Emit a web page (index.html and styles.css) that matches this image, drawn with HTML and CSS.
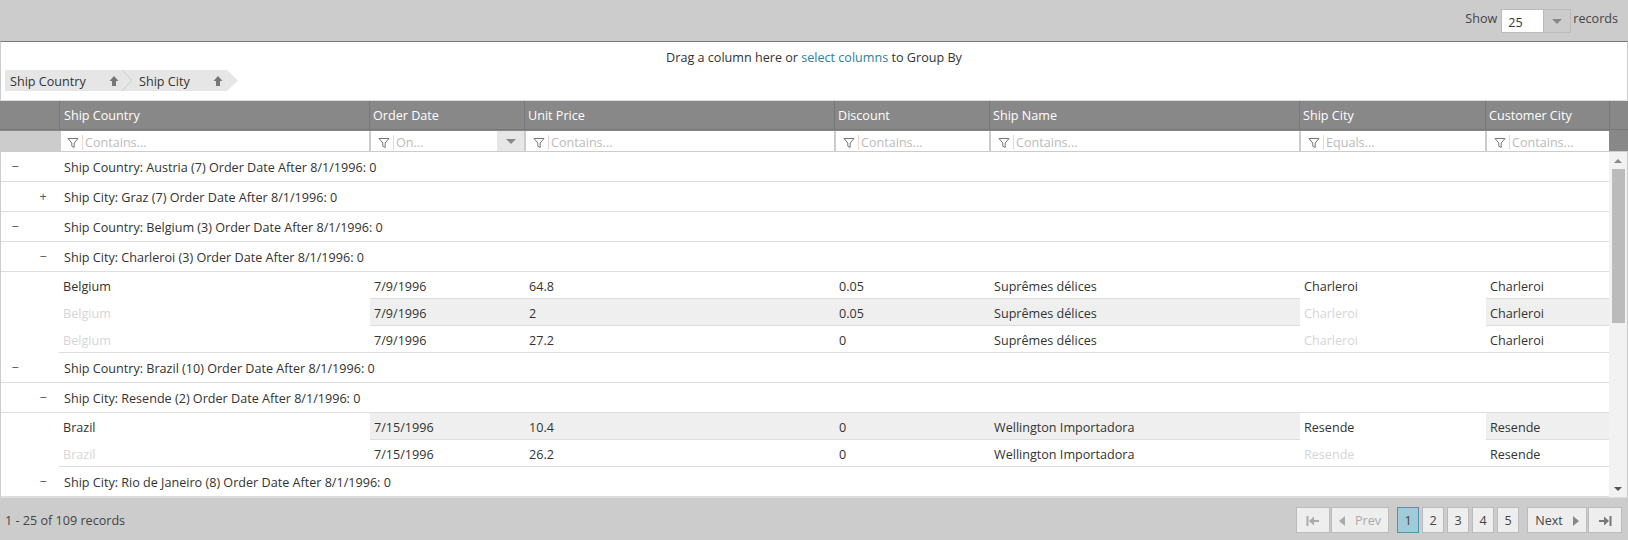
FILE: index.html
```html
<!DOCTYPE html>
<html lang="en">
<head>
<meta charset="utf-8">
<title>Grid</title>
<link rel="stylesheet" href="styles.css">
</head>
<body>
<svg class="defs" width="0" height="0" aria-hidden="true">
  <symbol id="funnel" viewBox="0 0 12 12"><path d="M1 1.500h10L7.200 6v4.500L4.800 9.200V6z" fill="none" stroke="#777" stroke-width="1"/></symbol>
  <symbol id="up" viewBox="0 0 10 12"><path d="M5 1l4.500 5H7v5H3V6H.5z" fill="#777"/></symbol>
</svg>
<header class="topbar">
  <span>Show</span>
  <div class="sizer"><span class="sizer-val">25</span><span class="sizer-btn"><i class="tri"></i></span></div>
  <span class="rec">records</span>
</header>
<section class="group-panel">
  <p class="hint">Drag a column here or <a href="#">select columns</a> to Group By</p>
  <div class="chips">
    <div class="chip chip-a"><span>Ship Country</span><svg class="up"><use href="#up"/></svg></div>
    <svg class="sep" viewBox="0 0 10 21"><path d="M0 0l10 10.500L0 21" fill="none" stroke="#ccc"/></svg>
    <div class="chip chip-b"><span>Ship City</span><svg class="up"><use href="#up"/></svg></div>
  </div>
</section>
<section class="grid">
  <div class="head row-cols">
    <div class="hc"></div><div class="hc hc-first">Ship Country</div><div class="hc">Order Date</div><div class="hc">Unit Price</div><div class="hc">Discount</div><div class="hc">Ship Name</div><div class="hc">Ship City</div><div class="hc">Customer City</div><div class="hc end"></div>
  </div>
  <div class="filters row-cols">
    <div class="fc blank"></div>
    <div class="fc fc-first"><svg class="fn"><use href="#funnel"/></svg><span class="ph">Contains...</span></div>
    <div class="fc"><svg class="fn"><use href="#funnel"/></svg><span class="ph">On...</span><span class="fdrop"><i class="tri"></i></span></div>
    <div class="fc"><svg class="fn"><use href="#funnel"/></svg><span class="ph">Contains...</span></div>
    <div class="fc"><svg class="fn"><use href="#funnel"/></svg><span class="ph">Contains...</span></div>
    <div class="fc"><svg class="fn"><use href="#funnel"/></svg><span class="ph">Contains...</span></div>
    <div class="fc"><svg class="fn"><use href="#funnel"/></svg><span class="ph">Equals...</span></div>
    <div class="fc"><svg class="fn"><use href="#funnel"/></svg><span class="ph">Contains...</span></div>
    <div class="fc blank end"></div>
  </div>
  <div class="body">
    <div class="rows">
      <div class="grp"><span class="tog">&#8722;</span><span class="tog"></span><span class="gt">Ship Country: Austria (7) Order Date After 8/1/1996: 0</span></div>
      <div class="grp"><span class="tog"></span><span class="tog">+</span><span class="gt">Ship City: Graz (7) Order Date After 8/1/1996: 0</span></div>
      <div class="grp"><span class="tog">&#8722;</span><span class="tog"></span><span class="gt">Ship Country: Belgium (3) Order Date After 8/1/1996: 0</span></div>
      <div class="grp"><span class="tog"></span><span class="tog">&#8722;</span><span class="gt">Ship City: Charleroi (3) Order Date After 8/1/1996: 0</span></div>
      <div class="row-data">
        <div class="c"></div><div class="c">Belgium</div><div class="c ln">7/9/1996</div><div class="c ln">64.8</div><div class="c ln">0.05</div><div class="c ln">Suprêmes délices</div><div class="c">Charleroi</div><div class="c ln">Charleroi</div>
      </div>
      <div class="row-data">
        <div class="c"></div><div class="c dim">Belgium</div><div class="c ln alt">7/9/1996</div><div class="c ln alt">2</div><div class="c ln alt">0.05</div><div class="c ln alt">Suprêmes délices</div><div class="c dim">Charleroi</div><div class="c ln alt">Charleroi</div>
      </div>
      <div class="row-data">
        <div class="c"></div><div class="c ln dim">Belgium</div><div class="c ln">7/9/1996</div><div class="c ln">27.2</div><div class="c ln">0</div><div class="c ln">Suprêmes délices</div><div class="c ln dim">Charleroi</div><div class="c ln">Charleroi</div>
      </div>
      <div class="grp"><span class="tog">&#8722;</span><span class="tog"></span><span class="gt">Ship Country: Brazil (10) Order Date After 8/1/1996: 0</span></div>
      <div class="grp"><span class="tog"></span><span class="tog">&#8722;</span><span class="gt">Ship City: Resende (2) Order Date After 8/1/1996: 0</span></div>
      <div class="row-data">
        <div class="c"></div><div class="c">Brazil</div><div class="c ln alt">7/15/1996</div><div class="c ln alt">10.4</div><div class="c ln alt">0</div><div class="c ln alt">Wellington Importadora</div><div class="c">Resende</div><div class="c ln alt">Resende</div>
      </div>
      <div class="row-data">
        <div class="c"></div><div class="c ln dim">Brazil</div><div class="c ln">7/15/1996</div><div class="c ln">26.2</div><div class="c ln">0</div><div class="c ln">Wellington Importadora</div><div class="c ln dim">Resende</div><div class="c ln">Resende</div>
      </div>
      <div class="grp"><span class="tog"></span><span class="tog">&#8722;</span><span class="gt">Ship City: Rio de Janeiro (8) Order Date After 8/1/1996: 0</span></div>
    </div>
    <div class="scroll">
      <span class="sb-btn"><i class="tri-up"></i></span>
      <div class="track"><div class="thumb"></div></div>
      <span class="sb-btn"><i class="tri-down"></i></span>
    </div>
  </div>
</section>
<footer class="pager">
  <span class="count">1 - 25 of 109 records</span>
  <nav class="pages">
    <div class="pg-pair">
      <a class="pg off wide"><svg class="nav" viewBox="0 0 14 12"><path d="M1.500 1v10" stroke="#aaa" stroke-width="2"/><path d="M3 6l5-4.500V5h5v2H8v3.500z" fill="#aaa"/></svg></a>
      <a class="pg off prev"><i class="arr-l"></i><span>Prev</span></a>
    </div>
    <div class="pg-nums">
      <a class="pg num on">1</a><a class="pg num">2</a><a class="pg num">3</a><a class="pg num">4</a><a class="pg num">5</a>
    </div>
    <div class="pg-pair">
      <a class="pg next"><span>Next</span><i class="arr-r"></i></a>
      <a class="pg wide last"><svg class="nav" viewBox="0 0 14 12"><path d="M12.500 1v10" stroke="#777" stroke-width="2"/><path d="M11 6L6 1.500V5H1v2h5v3.500z" fill="#777"/></svg></a>
    </div>
  </nav>
</footer>
</body>
</html>
```
FILE: styles.css
```css
* { box-sizing: border-box; }
html, body { margin: 0; padding: 0; }
body {
  width: 1628px;
  height: 540px;
  overflow: hidden;
  background: #ccc;
  font: 12.6px/16px "Open Sans", sans-serif;
  color: #333;
  display: flex;
  flex-direction: column;
}
.defs { position: absolute; }
.topbar {
  height: 41px;
  display: flex;
  align-items: flex-start;
  justify-content: flex-end;
  gap: 4px;
  padding: 11px 10px 0 0;
  color: #444;
}
.rec { margin-left: -2px; }
.sizer {
  width: 70px;
  height: 24px;
  margin-top: -2px;
  display: flex;
  border: 1px solid #bbb;
  background: #ccc;
}
.sizer-val { flex: 1; background: #fff; padding: 5px 0 0 6px; color: #333; }
.sizer-btn { width: 27px; display: flex; align-items: center; justify-content: center; border-left: 1px solid #bbb; }
.tri { display: block; width: 0; height: 0; border: 5px solid transparent; border-top: 5px solid #888; border-bottom: 0; }
.group-panel {
  height: 59px;
  background: #fff;
  border: 1px solid #777;
  border-width: 1px 1px 0 1px;
  border-right-color: #ccc;
  border-left-color: #ccc;
}
.hint { margin: 0; padding-top: 8px; text-align: center; height: 28px; }
.hint a { color: #2d8199; text-decoration: none; }
.chips {
  display: flex;
  width: 233px;
  height: 21px;
  margin-left: 4px;
  background: #e6e6e6;
  clip-path: polygon(0 0, 222px 0, 100% 50%, 222px 100%, 0 100%);
}
.chip { height: 21px; display: flex; align-items: center; color: #333; }
.chip span { padding-top: 2px; }
.chip-a { width: 117px; padding-left: 5px; }
.chip-a .up { margin-left: 23px; }
.chip-b { padding-left: 7px; }
.chip-b .up { margin-left: 23px; }
.sep { width: 10px; height: 21px; flex: none; }
.up { width: 10px; height: 12px; }
.grid { flex: 1; display: flex; flex-direction: column; min-height: 0; }
.row-cols { display: grid; grid-template-columns: 59px 310px 155px 310px 155px 310px 186px 124px 19px; }
.head { height: 31px; background: #888; border-top: 1px solid #ddd; }
.hc { height: 29px; padding: 7px 0 0 3px; color: #fff; font-weight: 500; border-left: 1px solid #777; border-bottom: 1px solid #777; }
.hc:first-child { border-left: 0; }
.hc-first { padding-left: 4px; }
.filters { height: 21px; background: #fff; border-bottom: 1px solid #ccc; }
.fc {
  height: 20px;
  display: flex;
  align-items: center;
  padding: 3px 0 0 7px;
  background: #fff;
  border-left: 2px solid #ccc;
  position: relative;
}
.fc.blank { background: #ccc; border-left: 0; }
.fc.end { background: #888; }
.fn { width: 12px; height: 12px; flex: none; }
.ph { margin-left: 3px; padding-left: 2px; border-left: 1px solid #f0d5cc; color: #bbb; line-height: 15px; }
.fc-first { padding-left: 6px; }
.fdrop { position: absolute; right: 0; top: 0; bottom: 0; width: 27px; background: #e6e6e6; display: flex; align-items: center; justify-content: center; }
.body { flex: 1; display: flex; background: #fff; min-height: 0; border-left: 1px solid #ccc; border-right: 1px solid #ccc; border-bottom: 1px solid #ddd; }
.rows { flex: none; width: 1608px; }
.grp { height: 30px; display: flex; align-items: center; border-bottom: 1px solid #ddd; }
.tog { width: 28px; text-align: center; color: #555; flex: none; }
.gt { padding: 2px 0 0 7px; color: #333; }
.row-data { display: grid; grid-template-columns: 58px 311px 155px 310px 155px 310px 186px 123px; }
.c { height: 27px; padding: 7px 0 0 4px; }
.ln { border-bottom: 1px solid #ddd; }
.alt { background: #efefef; }
.dim { color: #d6d6d6; }
.scroll { flex: 1; display: flex; flex-direction: column; align-items: center; background: #f2f2f2; }
.sb-btn { height: 17px; display: flex; align-items: center; justify-content: center; }
.tri-up { width: 0; height: 0; border: 4px solid transparent; border-top: 0; border-bottom: 4px solid #888; }
.tri-down { width: 0; height: 0; border: 4px solid transparent; border-bottom: 0; border-top: 4px solid #555; }
.track { flex: 1; width: 13px; }
.thumb { height: 154px; background: #bbb; }
.pager {
  height: 42px;
  display: flex;
  justify-content: space-between;
  align-items: flex-start;
  padding: 9px 6px 0 5px;
  color: #444;
}
.count { padding-top: 6px; }
.pages { display: flex; gap: 8px; }
.pg-pair { display: flex; gap: 1px; }
.pg-nums { display: flex; gap: 3px; }
.pg {
  height: 26px;
  border: 1px solid #bbb;
  background: #eee;
  display: flex;
  align-items: center;
  justify-content: center;
  padding-top: 2px;
  color: #444;
}
.pg.off { color: #aaa; }
.wide { width: 34px; }
.num { width: 22px; }
.num.on { background: #a1cbd9; border-color: #4c95ab; }
.prev { width: 58px; gap: 10px; }
.next { width: 60px; gap: 10px; }
.nav { width: 14px; height: 12px; }
.arr-l { width: 0; height: 0; border: 5px solid transparent; border-left: 0; border-right: 6px solid #aaa; }
.arr-r { width: 0; height: 0; border: 5px solid transparent; border-right: 0; border-left: 6px solid #888; }
```
